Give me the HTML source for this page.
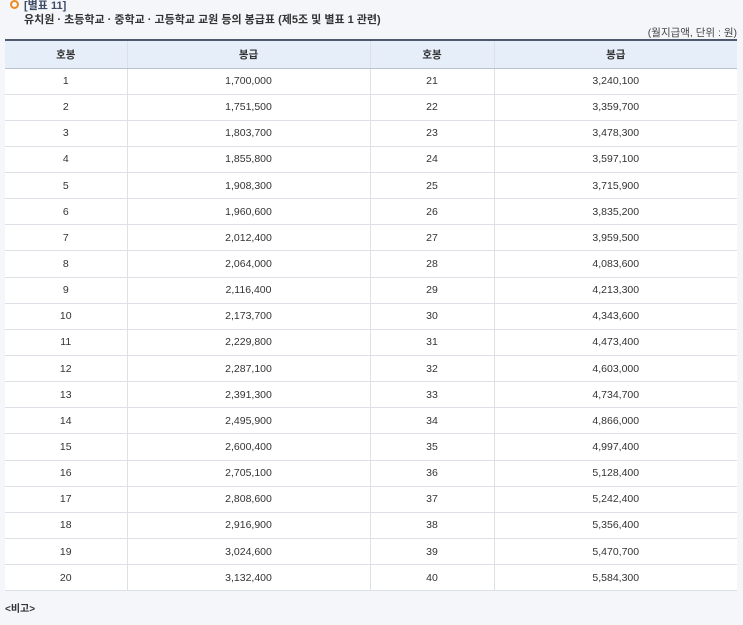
<html><head><style>
body{margin:0;background:#f5f6fa;font-family:"Liberation Sans","Noto Sans CJK KR",sans-serif;color:#333;width:743px;height:625px;overflow:hidden;position:relative}
.t1{position:absolute;left:24px;top:-3px;font-size:11px;font-weight:bold;color:#3d4b66}
.c{position:absolute;left:10px;top:0px;width:5px;height:5px;border:2.5px solid #f08a1c;border-radius:50%}
.t2{position:absolute;left:24px;top:11px;font-size:11px;font-weight:bold;color:#333}
.u{position:absolute;right:6px;top:25px;font-size:10.5px;color:#444}
table{position:absolute;left:5px;top:39px;width:732px;border-collapse:collapse;border-top:2px solid #4d5a6e;background:#fff;font-size:10.5px}
td,th{text-align:center;border-bottom:1px solid #dde0e6;border-right:1px solid #dde0e6;padding:0;box-sizing:border-box}
tr{height:26.15px}
tr:first-child{height:28px}
th{background:#e6eefa;font-weight:bold;border-bottom:1px solid #b9c3d3}
tr td:last-child,tr th:last-child{border-right:none}
.b{position:absolute;left:5px;top:600px;font-size:10px;font-weight:bold}
</style></head><body>
<div class="c"></div><div class="t1">[별표 11]</div>
<div class="t2">유치원 · 초등학교 · 중학교 · 고등학교 교원 등의 봉급표 (제5조 및 별표 1 관련)</div>
<div class="u">(월지급액, 단위 : 원)</div>
<table>
<colgroup><col style="width:122px"><col style="width:243px"><col style="width:124px"><col style="width:243px"></colgroup>
<tr><th>호봉</th><th>봉급</th><th>호봉</th><th>봉급</th></tr>
<tr><td>1</td><td>1,700,000</td><td>21</td><td>3,240,100</td></tr>
<tr><td>2</td><td>1,751,500</td><td>22</td><td>3,359,700</td></tr>
<tr><td>3</td><td>1,803,700</td><td>23</td><td>3,478,300</td></tr>
<tr><td>4</td><td>1,855,800</td><td>24</td><td>3,597,100</td></tr>
<tr><td>5</td><td>1,908,300</td><td>25</td><td>3,715,900</td></tr>
<tr><td>6</td><td>1,960,600</td><td>26</td><td>3,835,200</td></tr>
<tr><td>7</td><td>2,012,400</td><td>27</td><td>3,959,500</td></tr>
<tr><td>8</td><td>2,064,000</td><td>28</td><td>4,083,600</td></tr>
<tr><td>9</td><td>2,116,400</td><td>29</td><td>4,213,300</td></tr>
<tr><td>10</td><td>2,173,700</td><td>30</td><td>4,343,600</td></tr>
<tr><td>11</td><td>2,229,800</td><td>31</td><td>4,473,400</td></tr>
<tr><td>12</td><td>2,287,100</td><td>32</td><td>4,603,000</td></tr>
<tr><td>13</td><td>2,391,300</td><td>33</td><td>4,734,700</td></tr>
<tr><td>14</td><td>2,495,900</td><td>34</td><td>4,866,000</td></tr>
<tr><td>15</td><td>2,600,400</td><td>35</td><td>4,997,400</td></tr>
<tr><td>16</td><td>2,705,100</td><td>36</td><td>5,128,400</td></tr>
<tr><td>17</td><td>2,808,600</td><td>37</td><td>5,242,400</td></tr>
<tr><td>18</td><td>2,916,900</td><td>38</td><td>5,356,400</td></tr>
<tr><td>19</td><td>3,024,600</td><td>39</td><td>5,470,700</td></tr>
<tr><td>20</td><td>3,132,400</td><td>40</td><td>5,584,300</td></tr>
</table>
<div class="b">&lt;비고&gt;</div>
</body></html>
